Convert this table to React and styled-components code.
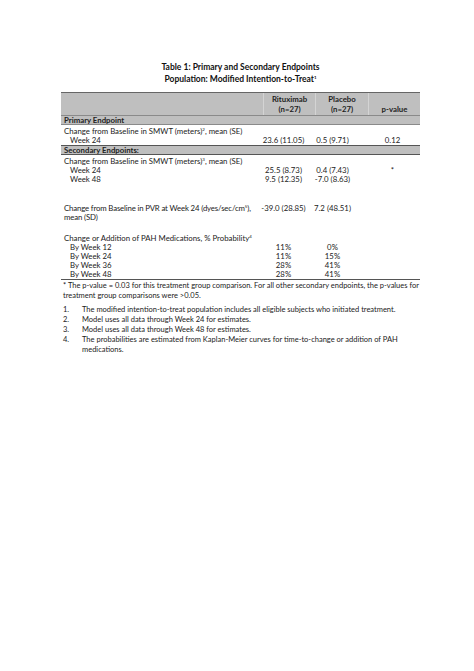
import React from 'react'
import styled, { createGlobalStyle } from 'styled-components'

const GlobalStyle = createGlobalStyle`
    body {
        margin: 0;
        background: #ffffff;
        font-family: Lato, "Liberation Sans", sans-serif;
        color: #222222;
    }
`

const Page = styled.div`
    width: 359px;
    padding: 62px 0 0 61px;
`

const Title = styled.div`
    text-align: center;
    font-weight: bold;
    font-size: 8.5px;
    line-height: 11.5px;
    color: #111111;
`

const Sup = styled.sup`
    font-size: 4.5px;
    vertical-align: 3px;
    line-height: 0;
`

const Table = styled.div`
    margin-top: 7px;
    font-size: 7.8px;
    line-height: 9px;
    border-bottom: 1px solid #555555;
    white-space: nowrap;
`

const HeaderRow = styled.div`
    display: grid;
    grid-template-columns: 202px 52px 53px 52px;
    background: #bfbfbf;
    border-top: 1px solid #666666;
    border-bottom: 1px solid #8a8a8a;
    height: 22px;
    font-weight: bold;
`

const HeadCell = styled.div`
    display: flex;
    flex-direction: column;
    justify-content: ${p => (p.bottom ? 'flex-end' : 'flex-start')};
    align-items: center;
    padding: 2px 0 1px;
    line-height: 9.5px;
    border-left: ${p => (p.first ? 'none' : '1px solid #d4d4d4')};
`

const SectionRow = styled.div`
    background: #bfbfbf;
    font-weight: bold;
    padding-left: 3px;
    height: 8px;
    line-height: 8.5px;
    border-bottom: 1px solid ${p => (p.strong ? '#555555' : '#8a8a8a')};
    border-top: ${p => (p.strong ? '1px solid #555555' : 'none')};
`

const Row = styled.div`
    display: grid;
    grid-template-columns: 198px 49px 49px 1fr;
    margin-top: ${p => p.gap || 0}px;
    line-height: ${p => p.lh || 9}px;
`

const Label = styled.div`
    padding-left: ${p => (p.indent ? 9 : 3)}px;
    letter-spacing: ${p => (p.tight ? '-0.15px' : 'normal')};
`

const Value = styled.div`
    text-align: center;
    padding-left: ${p => (p.last ? 8 : 0)}px;
`

const Notes = styled.div`
    font-size: 7.5px;
    line-height: 10px;
    padding: 1px 0 0 2px;
    white-space: nowrap;
`

const Note = styled.div`
    display: flex;
    margin-top: ${p => (p.first ? 4 : 0)}px;
`

const NoteNum = styled.span`
    width: 19px;
    flex-shrink: 0;
`

const DataRow = ({ label, indent, tight, rit, plac, p, gap, lh }) => (
    <Row gap={gap} lh={lh}>
        <Label indent={indent} tight={tight}>{label}</Label>
        <Value>{rit}</Value>
        <Value>{plac}</Value>
        <Value last>{p}</Value>
    </Row>
)

const byWeek = [
    ['By Week 12', '11%', '0%'],
    ['By Week 24', '11%', '15%'],
    ['By Week 36', '28%', '41%'],
    ['By Week 48', '28%', '41%'],
]

const numbered = [
    ['The modified intention-to-treat population includes all eligible subjects who initiated treatment.'],
    ['Model uses all data through Week 24 for estimates.'],
    ['Model uses all data through Week 48 for estimates.'],
    ['The probabilities are estimated from Kaplan-Meier curves for time-to-change or addition of PAH', 'medications.'],
]

const App = () => {
    return (
        <Page>
            <GlobalStyle />
            <Title>Table 1: Primary and Secondary Endpoints</Title>
            <Title>Population: Modified Intention-to-Treat<Sup>1</Sup></Title>
            <Table>
                <HeaderRow>
                    <HeadCell first />
                    <HeadCell>
                        <span>Rituximab</span>
                        <span>(n=27)</span>
                    </HeadCell>
                    <HeadCell>
                        <span>Placebo</span>
                        <span>(n=27)</span>
                    </HeadCell>
                    <HeadCell bottom>p-value</HeadCell>
                </HeaderRow>
                <SectionRow>Primary Endpoint</SectionRow>
                <DataRow gap={2} label={<>Change from Baseline in SMWT (meters)<Sup>2</Sup>, mean (SE)</>} />
                <DataRow indent label="Week 24" rit="23.6 (11.05)" plac="0.5 (9.71)" p="0.12" />
                <SectionRow strong>Secondary Endpoints:</SectionRow>
                <DataRow gap={2} label={<>Change from Baseline in SMWT (meters)<Sup>3</Sup>, mean (SE)</>} />
                <DataRow indent label="Week 24" rit="25.5 (8.73)" plac="0.4 (7.43)" p="*" />
                <DataRow indent label="Week 48" rit="9.5 (12.35)" plac="-7.0 (8.63)" />
                <DataRow
                    gap={20}
                    lh={8.5}
                    tight
                    label={<>Change from Baseline in PVR at Week 24 (dyes/sec/cm<Sup>5</Sup>),<br />mean (SD)</>}
                    rit="-39.0 (28.85)"
                    plac="7.2 (48.51)"
                />
                <DataRow gap={13} label={<>Change or Addition of PAH Medications, % Probability<Sup>4</Sup></>} />
                {byWeek.map(([label, rit, plac]) => (
                    <DataRow key={label} indent label={label} rit={rit} plac={plac} />
                ))}
            </Table>
            <Notes>
                <div>* The p-value = 0.03 for this treatment group comparison. For all other secondary endpoints, the p-values for</div>
                <div>treatment group comparisons were &gt;0.05.</div>
                {numbered.map((lines, i) => (
                    <Note key={i} first={i === 0}>
                        <NoteNum>{i + 1}.</NoteNum>
                        <div>
                            {lines.map(line => (
                                <div key={line}>{line}</div>
                            ))}
                        </div>
                    </Note>
                ))}
            </Notes>
        </Page>
    )
}

export default App
